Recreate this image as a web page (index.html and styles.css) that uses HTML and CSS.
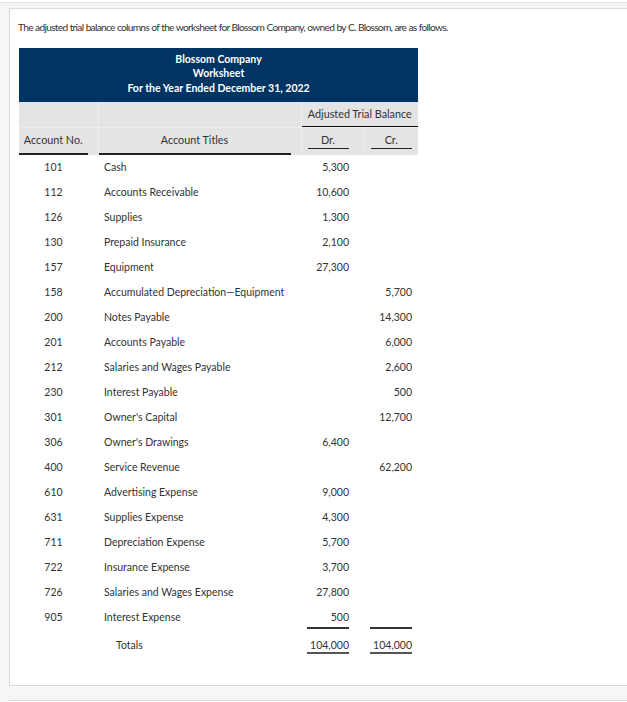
FILE: index.html
```html
<!DOCTYPE html>
<html>
<head>
<meta charset="utf-8">
<link rel="stylesheet" href="styles.css">
</head>
<body>
<div class="topline"></div>
<div class="card">
  <p class="intro">The adjusted trial balance columns of the worksheet for Blossom Company, owned by C. Blossom, are as follows.</p>
  <table class="ws">
    <colgroup><col class="c-no"><col class="c-title"><col class="c-dr"><col class="c-cr"></colgroup>
    <thead>
      <tr><th colspan="4" class="navy">Blossom Company<br>Worksheet<br>For the Year Ended December 31, 2022</th></tr>
      <tr class="h1">
        <th class="g"></th><th class="g sep"></th>
        <th class="g sep atb" colspan="2"><div class="atb-in">Adjusted Trial Balance</div></th>
      </tr>
      <tr class="h2">
        <th class="g no-h"><div class="ulh">Account No.</div></th>
        <th class="g sep title-h"><div class="ulh">Account Titles</div></th>
        <th class="g sep dr-h"><div class="uls">Dr.</div></th>
        <th class="g sep cr-h"><div class="uls">Cr.</div></th>
      </tr>
    </thead>
    <tbody>
      <tr><td class="no">101</td><td class="ti">Cash</td><td class="dr">5,300</td><td class="cr"></td></tr>
      <tr><td class="no">112</td><td class="ti">Accounts Receivable</td><td class="dr">10,600</td><td class="cr"></td></tr>
      <tr><td class="no">126</td><td class="ti">Supplies</td><td class="dr">1,300</td><td class="cr"></td></tr>
      <tr><td class="no">130</td><td class="ti">Prepaid Insurance</td><td class="dr">2,100</td><td class="cr"></td></tr>
      <tr><td class="no">157</td><td class="ti">Equipment</td><td class="dr">27,300</td><td class="cr"></td></tr>
      <tr><td class="no">158</td><td class="ti">Accumulated Depreciation—Equipment</td><td class="dr"></td><td class="cr">5,700</td></tr>
      <tr><td class="no">200</td><td class="ti">Notes Payable</td><td class="dr"></td><td class="cr">14,300</td></tr>
      <tr><td class="no">201</td><td class="ti">Accounts Payable</td><td class="dr"></td><td class="cr">6,000</td></tr>
      <tr><td class="no">212</td><td class="ti">Salaries and Wages Payable</td><td class="dr"></td><td class="cr">2,600</td></tr>
      <tr><td class="no">230</td><td class="ti">Interest Payable</td><td class="dr"></td><td class="cr">500</td></tr>
      <tr><td class="no">301</td><td class="ti">Owner's Capital</td><td class="dr"></td><td class="cr">12,700</td></tr>
      <tr><td class="no">306</td><td class="ti">Owner's Drawings</td><td class="dr">6,400</td><td class="cr"></td></tr>
      <tr><td class="no">400</td><td class="ti">Service Revenue</td><td class="dr"></td><td class="cr">62,200</td></tr>
      <tr><td class="no">610</td><td class="ti">Advertising Expense</td><td class="dr">9,000</td><td class="cr"></td></tr>
      <tr><td class="no">631</td><td class="ti">Supplies Expense</td><td class="dr">4,300</td><td class="cr"></td></tr>
      <tr><td class="no">711</td><td class="ti">Depreciation Expense</td><td class="dr">5,700</td><td class="cr"></td></tr>
      <tr><td class="no">722</td><td class="ti">Insurance Expense</td><td class="dr">3,700</td><td class="cr"></td></tr>
      <tr><td class="no">726</td><td class="ti">Salaries and Wages Expense</td><td class="dr">27,800</td><td class="cr"></td></tr>
      <tr class="last"><td class="no">905</td><td class="ti">Interest Expense</td><td class="dr"><div class="sub">500</div></td><td class="cr"><div class="sub"></div></td></tr>
      <tr class="tot"><td class="no"></td><td class="ti tl">Totals</td><td class="dr"><div class="dbl">104,000</div></td><td class="cr"><div class="dbl">104,000</div></td></tr>
    </tbody>
  </table>
</div>
<div class="nextcard"></div>
</body>
</html>
```

FILE: styles.css
```css
html, body {
  margin: 0;
  padding: 0;
}
body {
  background: #f6f6f6;
  font-family: Lato, "Open Sans", sans-serif;
  color: #333;
  width: 627px;
  height: 702px;
  overflow: hidden;
}
.topline {
  height: 2px;
  background: #fff;
  border-bottom: 1px solid #e2e2e2;
}
.card {
  margin: 5px -20px 0 9px;
  border: 1px solid #dadada;
  background: #fff;
  height: 678px;
  box-sizing: border-box;
  padding: 11px 0 0 8px;
}
.intro {
  margin: 0;
  font-size: 10.2px;
  line-height: 14px;
  letter-spacing: -0.72px;
  word-spacing: 0.4px;
  color: #333;
}
.ws {
  margin: 14px 0 0 1px;
  border-collapse: collapse;
  table-layout: fixed;
  width: 399px;
  font-size: 10.5px;
  color: #333;
}
.c-no { width: 79px; }
.c-title { width: 203px; }
.c-dr { width: 62px; }
.c-cr { width: 55px; }
th, td { padding: 0; }
.navy {
  background: #003462;
  color: #fff;
  font-weight: bold;
  font-size: 10.5px;
  line-height: 14.2px;
  height: 43px;
  padding: 4px 0 7px;
  text-align: center;
}
.g {
  background: #e4e4e4;
  font-weight: normal;
  font-size: 10.8px;
}
.sep { border-left: 1px solid #ededed; }
.h1 .g { height: 25px; border-bottom: 1px solid #ededed; }
.h2 .g { height: 27px; vertical-align: bottom; }
.atb { vertical-align: bottom; }
.atb-in {
  text-align: center;
  line-height: 13px;
  padding-bottom: 6px;
  border-bottom: 1px solid #111;
}
.ulh {
  text-align: center;
  line-height: 13px;
  padding-bottom: 7px;
  border-bottom: 2px solid #222;
}
.no-h { padding-right: 10px; }
.title-h { padding-right: 10px; }
.dr-h { padding: 0 14px 0 6px; }
.cr-h { padding: 0 6px 0 7px; }
.uls {
  text-align: center;
  line-height: 13px;
  padding-bottom: 2px;
  border-bottom: 1px solid #222;
  margin-bottom: 6px;
}
tbody td {
  height: 25px;
  line-height: 13px;
  vertical-align: middle;
}
.no { text-align: center; padding-right: 10px; }
.ti { padding-left: 6px; }
.dr { text-align: right; padding: 0 14px 0 6px; }
.cr { text-align: right; padding: 0 6px 0 7px; }
.last td { vertical-align: top; padding-top: 6px; height: 19px; }
.sub {
  height: 13px;
  padding-bottom: 3px;
  border-bottom: 2px solid #333;
}
.tot td { height: 20px; vertical-align: top; padding-top: 9px; }
.tl { padding-left: 18px; }
.dbl {
  padding-bottom: 0;
  border-bottom: 2px solid #555;
}
.nextcard {
  margin: 14px -20px 0 9px;
  border-top: 1px solid #dadada;
  background: #fff;
  height: 20px;
}
```
